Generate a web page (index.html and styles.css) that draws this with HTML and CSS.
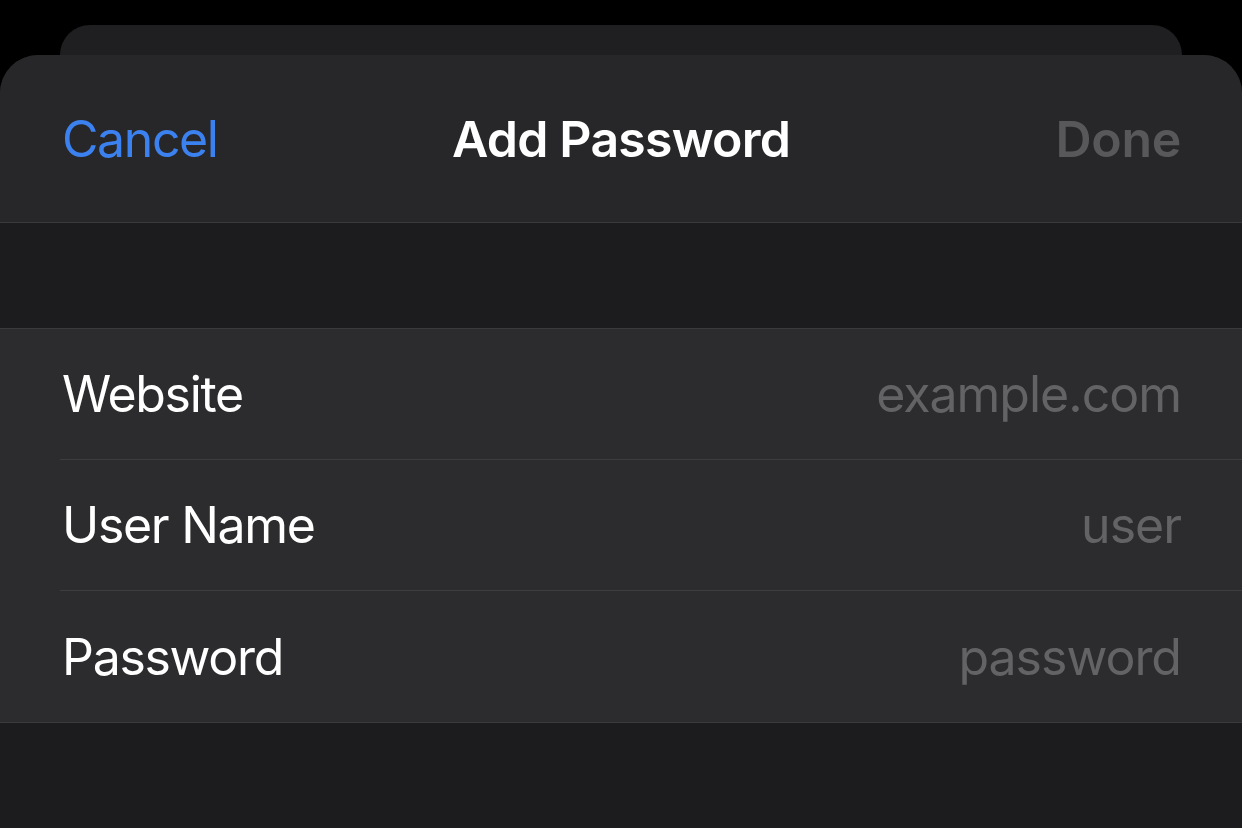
FILE: index.html
```html
<!DOCTYPE html>
<html>
<head>
<meta charset="utf-8">
<link rel="stylesheet" href="styles.css">
</head>
<body>
<div class="screen">
  <div class="back-card"></div>
  <div class="sheet">
    <div class="navbar">
      <span class="nav-btn cancel">Cancel</span>
      <span class="nav-title">Add Password</span>
      <span class="nav-btn done">Done</span>
    </div>
    <div class="gap"></div>
    <div class="group">
      <div class="row">
        <span class="label">Website</span>
        <span class="placeholder">example.com</span>
      </div>
      <div class="row">
        <span class="label">User Name</span>
        <span class="placeholder">user</span>
      </div>
      <div class="row">
        <span class="label">Password</span>
        <span class="placeholder">password</span>
      </div>
    </div>
  </div>
</div>
</body>
</html>
```
FILE: styles.css
```css
html, body {
  margin: 0;
  padding: 0;
  background: #000;
}
body {
  font-family: Inter, "Noto Sans", "Liberation Sans", sans-serif;
  width: 1242px;
  height: 828px;
  overflow: hidden;
}
.screen {
  position: relative;
  width: 1242px;
  height: 828px;
  background: #000;
  padding-top: 25px;
  box-sizing: border-box;
}
.back-card {
  margin: 0 60px;
  height: 60px;
  background: #1f1f21;
  border-radius: 30px 30px 0 0;
}
.sheet {
  position: absolute;
  left: 0;
  right: 0;
  top: 55px;
  bottom: 0;
  background: #1c1c1e;
  border-radius: 38px 38px 0 0;
  overflow: hidden;
}
.navbar {
  height: 167px;
  background: #272729;
  border-bottom: 1px solid #3a3a3c;
  display: flex;
  align-items: center;
  justify-content: space-between;
  padding: 0 61px 0 62px;
  position: relative;
  font-size: 50px;
}
.cancel { color: #3b82f0; letter-spacing: -1.4px; }
.done { color: #58585b; font-weight: 600; letter-spacing: -0.3px; }
.nav-title {
  position: absolute;
  left: 0;
  right: 0;
  text-align: center;
  color: #fff;
  font-weight: 600;
  letter-spacing: -0.8px;
  pointer-events: none;
}
.gap {
  height: 105px;
}
.group {
  background: #2c2c2e;
  border-top: 1px solid #3a3a3c;
  border-bottom: 1px solid #3a3a3c;
}
.row {
  height: 130px;
  margin-left: 60px;
  padding-right: 61px;
  display: flex;
  align-items: center;
  justify-content: space-between;
  font-size: 50px;
  border-bottom: 1px solid #3d3d40;
}
.row:last-child {
  border-bottom: none;
  height: 131px;
}
.label {
  color: #fff;
  margin-left: 2px;
  letter-spacing: -1.3px;
}
.placeholder {
  color: #636366;
  letter-spacing: -1px;
}
```
